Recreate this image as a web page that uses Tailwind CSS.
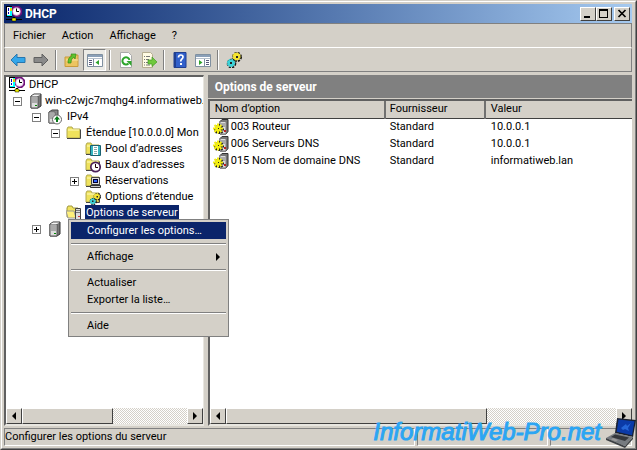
<!DOCTYPE html>
<html lang="fr">
<head>
    <meta charset="UTF-8">
    <meta name="viewport" content="width=device-width, initial-scale=1.0">
    <title>DHCP</title>

    <!-- Tailwind CSS -->
    <script src="https://cdn.jsdelivr.net/npm/@tailwindcss/browser@4"></script>
</head>
<body class="h-screen overflow-hidden bg-[#d4d0c8] font-[Roboto,sans-serif] text-[11px] leading-4 text-black">

    <!-- Shared icons -->
    <svg class="hidden" aria-hidden="true">
        <symbol id="icon-dhcp" viewBox="0 0 16 16">
            <path d="M0 0h6v11H0z" fill="#000"/><path d="M1 1h5v9H1z" fill="#0ff"/><path d="M1 1h3v8H1z" fill="#fff"/><path d="M2 2h1v3H2zM2 6h1v2H2z" fill="#00a"/><path d="M4 2h2v3H4z" fill="#dd0"/>
            <path d="M6 0h7l3 3v5l-3 3H9L6 8z" fill="#70107a"/>
            <circle cx="10.500" cy="5.500" r="3.900" fill="#fff" stroke="#c090c8" stroke-width=".6"/>
            <path d="M10.500 2.500v3h2.500" fill="none" stroke="#000"/>
            <path d="M7 11h2v2H7zM0 13h16v1H0z" fill="#000"/><path d="M6 12h4v3H6z" fill="#ee0" stroke="#000" stroke-width=".5"/>
        </symbol>
        <symbol id="icon-server" viewBox="0 0 16 16">
            <path d="M3 3l3-2h7v12l-3 2H3z" fill="#777" stroke="#333"/>
            <path d="M3 3h7v12H3z" fill="#ddd" stroke="#555"/><path d="M3.500 3L6 1.500h6.500L10 3z" fill="#f4f4f4"/>
            <path d="M4 5h5M4 7h5M4 9h5" stroke="#777"/><path d="M7 12h2v1H7z" fill="#080"/>
        </symbol>
        <symbol id="icon-ipv4" viewBox="0 0 16 16">
            <path d="M2 3l3-2h6v12l-3 1H2z" fill="#888" stroke="#444"/>
            <path d="M2 3h6v11H2z" fill="#ddd" stroke="#666"/><path d="M3 5h4M3 7h4M3 9h4" stroke="#777"/>
            <circle cx="10" cy="10.500" r="4.500" fill="#fff" stroke="#666"/>
            <path d="M10 7l3 3.500h-2V13H9v-2.500H7z" fill="#087a18"/>
        </symbol>
        <symbol id="icon-folder" viewBox="0 0 16 16">
            <path d="M1 13V4l1-2h4l1 2h7v9z" fill="#efe25c" stroke="#b0a850"/>
            <path d="M2 5h11" stroke="#fffbc0"/><path d="M1 13.500h13.500V4.500" fill="none" stroke="#444"/>
        </symbol>
        <symbol id="icon-pool" viewBox="0 0 16 16">
            <use href="#icon-folder"/>
            <path d="M5.500 4.500h10v10h-10z" fill="#fff" stroke="#186070"/><path d="M6 5h2v9H6zM13 5h2v9h-2z" fill="#35b5c0"/>
            <path d="M9 6.500h3M9 8.500h3M9 10.500h3M9 12.500h3" stroke="#8aa"/>
        </symbol>
        <symbol id="icon-lease" viewBox="0 0 16 16">
            <use href="#icon-folder"/>
            <circle cx="10.500" cy="10" r="4.700" fill="#fff" stroke="#4a2058" stroke-width="1.700"/><path d="M10.500 7v3.500H13" fill="none" stroke="#200"/>
        </symbol>
        <symbol id="icon-reservation" viewBox="0 0 16 16">
            <use href="#icon-folder"/>
            <path d="M6.500 4.500h8v7h-8z" fill="#ddd" stroke="#444"/><path d="M8 6h5v4H8z" fill="#003"/><path d="M9 7h3v2H9z" fill="#36f"/><path d="M5.500 12.500h10v2h-10z" fill="#ccc" stroke="#333"/>
        </symbol>
        <symbol id="icon-gears" viewBox="0 0 16 16">
            <circle cx="11" cy="5" r="3.800" fill="none" stroke="#111" stroke-width="2.400" stroke-dasharray="2 1"/><circle cx="10.500" cy="4.500" r="3.400" fill="#f5e531" stroke="#f5e531" stroke-width="1.500" stroke-dasharray="1.600 1.070"/><path d="M10 4h2v2h-2z" fill="#222"/>
            <circle cx="5.500" cy="11.500" r="3.600" fill="none" stroke="#111" stroke-width="2.400" stroke-dasharray="2 1"/><circle cx="5" cy="11" r="3.400" fill="#3cd3d8" stroke="#3cd3d8" stroke-width="1.500" stroke-dasharray="1.600 1.070"/><path d="M4 10h2v2H4z" fill="#222"/>
        </symbol>
        <symbol id="icon-folder-gears" viewBox="0 0 16 16">
            <use href="#icon-folder"/><use href="#icon-gears" x="4" y="4" width="12" height="12"/>
        </symbol>
        <symbol id="icon-folder-server" viewBox="0 0 16 16">
            <path d="M1 12V3l1-2h4l1 2h5v9z" fill="#f1e35e" stroke="#a09840"/><path d="M0 6h8l2 7H2z" fill="#fff07a" stroke="#999"/>
            <path d="M9.500 3.500h5v11h-5z" fill="#ddd" stroke="#444"/><path d="M10 5.500h4M10 7.500h4" stroke="#777"/><path d="M12 11h2v1h-2z" fill="#c33"/>
        </symbol>
        <symbol id="icon-option" viewBox="0 0 16 16">
            <path d="M7 2.500L9 .5h6v12L13 15H7z" fill="#777" stroke="#333"/><path d="M7 2.500h6V15H7z" fill="#ddd" stroke="#777"/><path d="M8 5h4M8 7h4" stroke="#777"/>
            <path d="M11 11h2v2h-2z" fill="#b22"/>
            <path d="M6 5v10M1 10.500h10M2.500 7l7 7M9.500 7l-7 7" stroke="#222" stroke-width="2"/>
            <path d="M5 4.500v10M0 9.500h10M1.500 6l7 7M8.500 6l-7 7" stroke="#f3ee10" stroke-width="2"/>
            <path d="M5 9h1v1H5z" fill="#222"/>
        </symbol>
        <symbol id="icon-arrow" viewBox="0 0 16 16">
            <path d="M1 8l6-6v3.500h8v5H7V14z" stroke-linejoin="round"/>
        </symbol>
        <symbol id="icon-window" viewBox="0 0 16 16">
            <path d="M.5 2.500h15v12H.5z" fill="#fff" stroke="#8090a0"/><path d="M1 3h14v2H1z" fill="#8ba0b8"/><path d="M1 6.500h14" stroke="#b5c0cc"/>
        </symbol>
    </svg>

    <div class="flex h-full flex-col border border-t-[#d4d0c8] border-r-[#404040] border-b-[#404040] border-l-[#d4d0c8]">
    <div class="flex min-h-0 grow flex-col border border-t-white border-r-[#808080] border-b-[#808080] border-l-white p-0.5 pr-[3px]">

        <!-- Title bar -->
        <header class="flex h-[19px] shrink-0 items-center bg-linear-to-r from-[#0a246a] to-[#a6caf0] px-0.5">
            <svg class="size-4"><use href="#icon-dhcp"/></svg>
            <h1 class="grow pl-[3px] text-xs font-bold text-white">DHCP</h1>
            <button aria-label="Réduire" class="flex h-3.5 w-4 items-center justify-center border border-t-white border-r-[#404040] border-b-[#404040] border-l-white bg-[#d4d0c8]">
                <svg class="h-3 w-3.5" viewBox="0 0 14 12"><path d="M3 8h6v2H3z"/></svg>
            </button>
            <button aria-label="Agrandir" class="flex h-3.5 w-4 items-center justify-center border border-t-white border-r-[#404040] border-b-[#404040] border-l-white bg-[#d4d0c8]">
                <svg class="h-3 w-3.5" viewBox="0 0 14 12"><path d="M2 1h9v9H2zM3 3v6h7V3z" fill-rule="evenodd"/></svg>
            </button>
            <button aria-label="Fermer" class="ml-0.5 flex h-3.5 w-4 items-center justify-center border border-t-white border-r-[#404040] border-b-[#404040] border-l-white bg-[#d4d0c8]">
                <svg class="h-3 w-3.5" viewBox="0 0 14 12"><path d="M3.500 2l7 7M10.500 2l-7 7" stroke="#000" stroke-width="1.700"/></svg>
            </button>
        </header>

        <!-- Menu bar -->
        <nav class="flex h-[25px] shrink-0 items-center gap-4 border border-t-[#808080] border-r-[#808080] border-b-white border-l-[#808080] pl-2">
            <button>Fichier</button>
            <button>Action</button>
            <button>Affichage</button>
            <button>?</button>
        </nav>

        <!-- Toolbar -->
        <div role="toolbar" class="flex h-6 shrink-0 items-center border border-t-[#d4d0c8] border-r-[#808080] border-b-[#808080] border-l-[#808080] pl-px">
            <button aria-label="Précédent" class="flex w-[23px] justify-center"><svg class="size-4 fill-[#35a7ea] stroke-[#2876ae]"><use href="#icon-arrow"/></svg></button>
            <button aria-label="Suivant" class="flex w-[23px] justify-center"><svg class="size-4 -scale-x-100 fill-[#8a8a8a] stroke-[#606060]"><use href="#icon-arrow"/></svg></button>
            <span class="mx-[3px] h-5 w-0.5 border-l border-[#808080] bg-white"></span>
            <button aria-label="Dossier parent" class="flex w-[23px] justify-center">
                <svg class="size-4" viewBox="0 0 16 16"><path d="M1 14.500V5h5l1-2h7v11.500z" fill="#edc460" stroke="#c89b3c"/><path d="M2 8h12" stroke="#f9e3a0"/><path d="M4 11c0-4 1-6 4-7L7 2l5 0 -1 5-1-2C8 6 7 8 7 11z" fill="#5ec52d" stroke="#328c18" stroke-width=".7"/></svg>
            </button>
            <button aria-label="Afficher l’arborescence" aria-pressed="true" class="flex h-[22px] w-[23px] items-center justify-center border border-t-[#808080] border-r-white border-b-white border-l-[#808080] bg-[#ecebe6]">
                <svg class="size-4" viewBox="0 0 16 16"><use href="#icon-window"/><path d="M6.500 7v7" stroke="#8090a0"/><path d="M2 8.500h3M2 10.500h3M2 12.500h3" stroke="#557"/><path d="M12 8v5L8.500 10.500z" fill="#2fa32b"/></svg>
            </button>
            <span class="mx-[3px] h-5 w-0.5 border-l border-[#808080] bg-white"></span>
            <button aria-label="Actualiser" class="flex w-[23px] justify-center">
                <svg class="size-4" viewBox="0 0 16 16"><path d="M2.500.5h8l3 3v12h-11z" fill="#fff" stroke="#a9a9a9"/><path d="M10.500 11.500A3.600 3.600 0 1 1 11.500 8" fill="none" stroke="#2da52b" stroke-width="2"/><path d="M8.500 9h5v5z" fill="#2da52b"/></svg>
            </button>
            <button aria-label="Exporter la liste" class="flex w-[23px] justify-center">
                <svg class="size-4" viewBox="0 0 16 16"><path d="M1.500.5h8l2 2v13h-10z" fill="#fffbe4" stroke="#b5ad91"/><path d="M3 4.500h6M3 7.500h5M3 10.500h5M3 13h6" stroke="#777" stroke-dasharray="1 1 6"/><path d="M7 8h4V5l5 5-5 4.500V12H7z" fill="#70c93d" stroke="#439a25" stroke-width=".7"/></svg>
            </button>
            <span class="mx-[3px] h-5 w-0.5 border-l border-[#808080] bg-white"></span>
            <button aria-label="Aide" class="flex w-[23px] justify-center">
                <svg class="size-4" viewBox="0 0 16 16"><path d="M2 .5h12v15H2z" fill="#3260cb" stroke="#203f91"/><path d="M2 1h2v14H2z" fill="#203f91"/><path d="M6.500 5.500C6.500 2 11 2.500 11 5c0 2-2.300 2-2.300 4.500" fill="none" stroke="#fff" stroke-width="1.700"/><path d="M8 11h2v2H8z" fill="#fff"/></svg>
            </button>
            <button aria-label="Afficher le volet d’actions" class="flex w-[23px] justify-center">
                <svg class="size-4" viewBox="0 0 16 16"><use href="#icon-window"/><path d="M9.500 7v7" stroke="#8090a0"/><path d="M11 8.500h3M11 10.500h3M11 12.500h3" stroke="#557"/><path d="M4 8v5l3.500-2.500z" fill="#2fa32b"/></svg>
            </button>
            <span class="mx-[3px] h-5 w-0.5 border-l border-[#808080] bg-white"></span>
            <button aria-label="Options de serveur" class="flex w-[23px] justify-center"><svg class="size-4"><use href="#icon-gears"/></svg></button>
        </div>

        <!-- Panes -->
        <main class="mt-[3px] flex min-h-0 grow gap-1">

            <!-- Console tree -->
            <section class="relative flex w-[31.8%] shrink-0 flex-col border-2 border-r border-t-[#606060] border-r-[#e8e6e0] border-b-[#e8e6e0] border-l-[#606060] bg-white">
                <ul role="tree" class="grow overflow-hidden whitespace-nowrap">
                    <li class="flex h-4 items-center pl-[3px]">
                        <svg class="size-4 shrink-0"><use href="#icon-dhcp"/></svg><span class="ml-1">DHCP</span>
                    </li>
                    <li class="flex h-4 items-center pl-[7px]">
                        <button aria-label="Réduire" class="mr-1.5 size-[9px] shrink-0 border border-[#808080]"><svg class="size-[7px]" viewBox="0 0 7 7"><path d="M1 3h5v1H1z"/></svg></button>
                        <svg class="size-4 shrink-0"><use href="#icon-server"/></svg><span class="ml-px">win-c2wjc7mqhg4.informatiweb.</span>
                    </li>
                    <li class="flex h-4 items-center pl-[26px]">
                        <button aria-label="Réduire" class="mr-1.5 size-[9px] shrink-0 border border-[#808080]"><svg class="size-[7px]" viewBox="0 0 7 7"><path d="M1 3h5v1H1z"/></svg></button>
                        <svg class="size-4 shrink-0"><use href="#icon-ipv4"/></svg><span class="ml-1">IPv4</span>
                    </li>
                    <li class="flex h-4 items-center pl-[45px]">
                        <button aria-label="Réduire" class="mr-1.5 size-[9px] shrink-0 border border-[#808080]"><svg class="size-[7px]" viewBox="0 0 7 7"><path d="M1 3h5v1H1z"/></svg></button>
                        <svg class="size-4 shrink-0"><use href="#icon-folder"/></svg><span class="ml-1">Étendue [10.0.0.0] Mon</span>
                    </li>
                    <li class="flex h-4 items-center pl-[79px]">
                        <svg class="size-4 shrink-0"><use href="#icon-pool"/></svg><span class="ml-1">Pool d’adresses</span>
                    </li>
                    <li class="flex h-4 items-center pl-[79px]">
                        <svg class="size-4 shrink-0"><use href="#icon-lease"/></svg><span class="ml-1">Baux d’adresses</span>
                    </li>
                    <li class="flex h-4 items-center pl-16">
                        <button aria-label="Développer" class="mr-1.5 size-[9px] shrink-0 border border-[#808080]"><svg class="size-[7px]" viewBox="0 0 7 7"><path d="M1 3h5v1H1zM3 1h1v5H3z"/></svg></button>
                        <svg class="size-4 shrink-0"><use href="#icon-reservation"/></svg><span class="ml-1">Réservations</span>
                    </li>
                    <li class="flex h-4 items-center pl-[79px]">
                        <svg class="size-4 shrink-0"><use href="#icon-folder-gears"/></svg><span class="ml-1">Options d’étendue</span>
                    </li>
                    <li aria-selected="true" class="flex h-4 items-center pl-[60px]">
                        <svg class="size-4 shrink-0"><use href="#icon-folder-server"/></svg><span class="ml-[3px] bg-[#0a246a] px-px text-white">Options de serveur</span>
                    </li>
                    <li class="flex h-4 items-center pl-[26px]">
                        <button aria-label="Développer" class="mr-1.5 size-[9px] shrink-0 border border-[#808080]"><svg class="size-[7px]" viewBox="0 0 7 7"><path d="M1 3h5v1H1zM3 1h1v5H3z"/></svg></button>
                        <svg class="size-4 shrink-0"><use href="#icon-server"/></svg>
                    </li>
                </ul>

                <div class="flex h-4 bg-[repeating-conic-gradient(#fff_0_25%,#d4d0c8_0_50%)] [background-size:2px_2px]">
                    <button aria-label="Défiler à gauche" class="w-4 shrink-0 border border-t-white border-r-[#404040] border-b-[#404040] border-l-white bg-[#d4d0c8]"><svg class="size-3.5" viewBox="0 0 14 14"><path d="M9 3v8L5 7z"/></svg></button>
                    <div class="flex grow"><div class="w-[55%] border border-t-white border-r-[#404040] border-b-[#404040] border-l-white bg-[#d4d0c8]"></div></div>
                    <button aria-label="Défiler à droite" class="w-4 shrink-0 border border-t-white border-r-[#404040] border-b-[#404040] border-l-white bg-[#d4d0c8]"><svg class="size-3.5" viewBox="0 0 14 14"><path d="M5 3v8l4-4z"/></svg></button>
                </div>

                <!-- Context menu -->
                <div role="menu" class="absolute top-[142px] left-[62px] z-10 flex w-[161px] flex-col border border-[#808080] bg-[#d4d0c8] p-0.5 whitespace-nowrap">
                    <button role="menuitem" class="h-[17px] bg-[#0a246a] pl-4 text-left text-white">Configurer les options…</button>
                    <hr class="mt-1 mb-[3px] h-0.5 border-t border-[#808080] bg-white">
                    <button role="menuitem" class="flex h-[17px] items-center justify-between pr-1.5 pl-4 text-left">Affichage<svg class="h-2 w-1" viewBox="0 0 4 8"><path d="M0 0v8l4-4z"/></svg></button>
                    <hr class="mt-1 mb-[3px] h-0.5 border-t border-[#808080] bg-white">
                    <button role="menuitem" class="h-[17px] pl-4 text-left">Actualiser</button>
                    <button role="menuitem" class="h-[17px] pl-4 text-left">Exporter la liste…</button>
                    <hr class="mt-1 mb-[3px] h-0.5 border-t border-[#808080] bg-white">
                    <button role="menuitem" class="h-[17px] pl-4 text-left">Aide</button>
                </div>
            </section>

            <!-- Option list -->
            <section class="flex min-w-0 grow flex-col">
                <h2 class="h-[23px] shrink-0 bg-[#808080] pt-1 pl-[7px] text-xs font-bold text-white">Options de serveur</h2>
                <div class="mt-px flex min-h-0 grow flex-col border-t-2 border-b-2 border-l-2 border-t-[#606060] border-b-[#e8e6e0] border-l-[#606060] bg-white">
                    <div class="grow">
                        <table class="w-full table-fixed border-collapse text-left whitespace-nowrap">
                            <colgroup><col class="w-[175px]"><col class="w-[100px]"><col></colgroup>
                            <thead>
                                <tr class="h-[17px] bg-[#d4d0c8]">
                                    <th class="border-r-2 border-b border-r-[#707070] border-b-[#404040] p-0 pl-[5px] font-normal">Nom d’option</th>
                                    <th class="border-r-2 border-b border-r-[#707070] border-b-[#404040] p-0 pl-1 font-normal">Fournisseur</th>
                                    <th class="border-b border-b-[#404040] p-0 pl-[5px] font-normal">Valeur</th>
                                </tr>
                            </thead>
                            <tbody>
                                <tr class="h-[17px]">
                                    <td class="p-0 pl-[3px]"><div class="flex items-center gap-0.5"><svg class="size-4"><use href="#icon-option"/></svg>003 Routeur</div></td>
                                    <td class="p-0 pl-[5px]">Standard</td>
                                    <td class="p-0 pl-1.5">10.0.0.1</td>
                                </tr>
                                <tr class="h-[17px]">
                                    <td class="p-0 pl-[3px]"><div class="flex items-center gap-0.5"><svg class="size-4"><use href="#icon-option"/></svg>006 Serveurs DNS</div></td>
                                    <td class="p-0 pl-[5px]">Standard</td>
                                    <td class="p-0 pl-1.5">10.0.0.1</td>
                                </tr>
                                <tr class="h-[17px]">
                                    <td class="p-0 pl-[3px]"><div class="flex items-center gap-0.5"><svg class="size-4"><use href="#icon-option"/></svg>015 Nom de domaine DNS</div></td>
                                    <td class="p-0 pl-[5px]">Standard</td>
                                    <td class="p-0 pl-1.5">informatiweb.lan</td>
                                </tr>
                            </tbody>
                        </table>
                    </div>
                    <div class="flex h-4 bg-[repeating-conic-gradient(#fff_0_25%,#d4d0c8_0_50%)] [background-size:2px_2px]">
                        <button aria-label="Défiler à gauche" class="w-4 shrink-0 border border-t-white border-r-[#404040] border-b-[#404040] border-l-white bg-[#d4d0c8]"><svg class="size-3.5" viewBox="0 0 14 14"><path d="M9 3v8L5 7z"/></svg></button>
                        <div class="flex grow"><div class="w-[67%] border border-t-white border-r-[#404040] border-b-[#404040] border-l-white bg-[#d4d0c8]"></div></div>
                        <button aria-label="Défiler à droite" class="w-4 shrink-0 border border-t-white border-r-[#404040] border-b-[#404040] border-l-white bg-[#d4d0c8]"><svg class="size-3.5" viewBox="0 0 14 14"><path d="M5 3v8l4-4z"/></svg></button>
                    </div>
                </div>
            </section>
        </main>

        <!-- Status bar -->
        <footer class="mt-0.5 flex h-[18px] shrink-0 gap-0.5">
            <p class="grow border border-t-[#808080] border-r-white border-b-white border-l-[#808080]">Configurer les options du serveur</p>
            <div class="w-[21%] border border-t-[#808080] border-r-white border-b-white border-l-[#808080]"></div>
            <div class="w-[13%] border border-t-[#808080] border-r-white border-b-white border-l-[#808080]"></div>
        </footer>
    </div>
    </div>

    <!-- Site mark -->
    <div class="absolute right-0 bottom-0 z-20 flex items-center gap-1">
        <span class="pb-0.5 font-['Liberation_Sans',sans-serif] text-2xl text-[#2ba5f3] italic [-webkit-text-stroke:1px_#2ba5f3]">InformatiWeb-Pro.net</span>
        <svg class="h-[30px] w-8" viewBox="0 0 32 30">
            <path d="M12 0l19 2-3 17-18-4z" fill="#1a2030"/><path d="M13.500 1.500l16 1.700-2.500 14-15.300-3.500z" fill="#0b3aa8"/>
            <path d="M16 10l5-4 1 2 4-3-3 5 1 3-4-2-2 1z" fill="#2566d8"/>
            <path d="M10 15l18 4-8 9L1 20z" fill="#777b80"/><path d="M10 16.500l14 3-4 3.500-14-4z" fill="#34373c"/><path d="M1 20l19 8 8-9v2l-8 9L1 22z" fill="#3c3f43"/><path d="M8 20l5 2-2 1.500-5-2z" fill="#999"/>
        </svg>
    </div>

</body>
</html>
